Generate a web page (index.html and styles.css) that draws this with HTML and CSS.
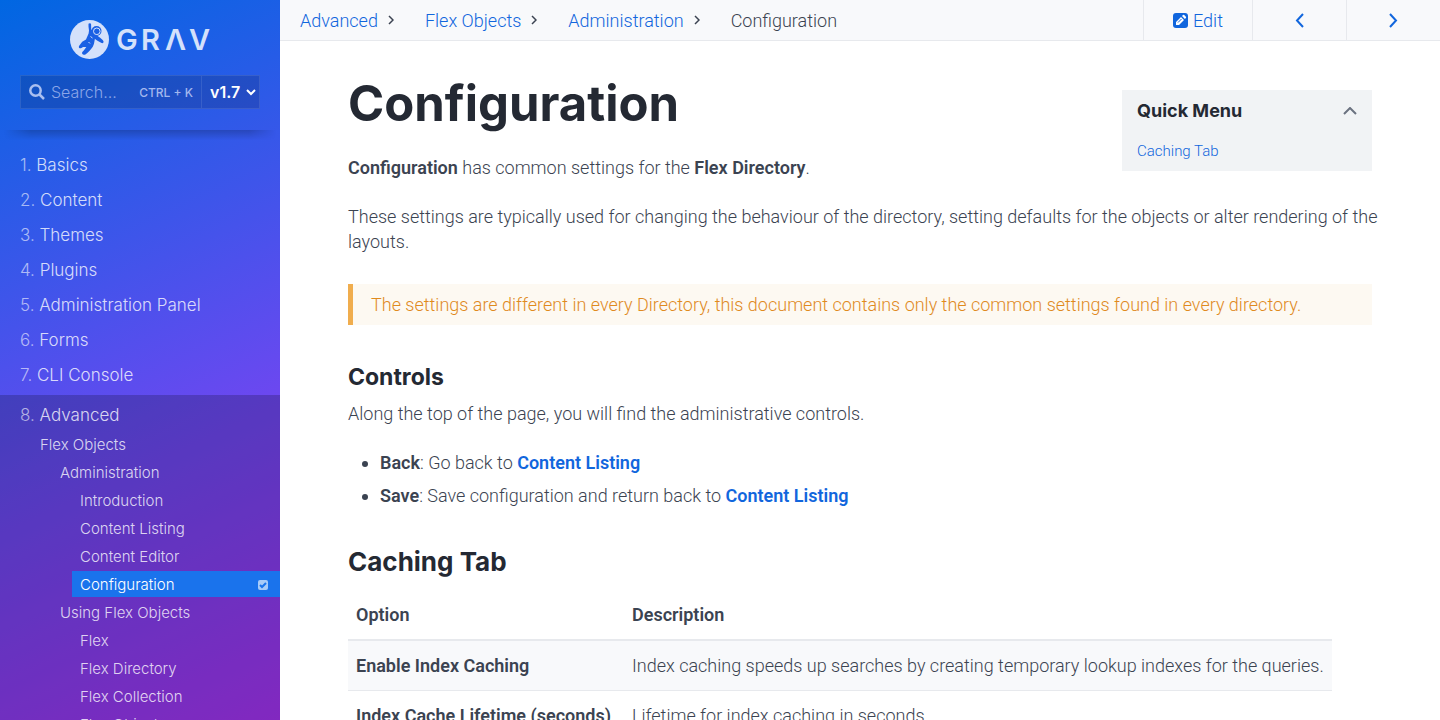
FILE: index.html
```html
<!DOCTYPE html>
<html lang="en">
<head>
    <meta charset="UTF-8">
    <meta name="viewport" content="width=device-width, initial-scale=1.0">
    <title>Configuration | Grav Documentation</title>
    <link rel="stylesheet" href="styles.css">
</head>
<body>
<aside class="sidebar">
    <header class="sidebar-header">
        <a class="logo" href="#" aria-label="Grav">
            <svg width="140" height="40" viewBox="0 0 140 40">
                <circle class="logo-disc" cx="19.500" cy="19.500" r="19.500"/>
                <g class="astronaut">
                    <path d="M18.500 3.800c1-.9 2.400-.6 2.600.8l.1 4.600 1.200 1.600 6.300 6c2 1.500 4 2.800 4.800 4.500.2 1.600-.7 2.300-1.900 1.800-2.500-1.200-5-2.600-6.700-4.300l-.9 5-1.200 3c-2.300 3-4.500 5.600-7 7.400-1.500.9-3 .7-3.600-.4-.6-1.200.6-2.200 1.600-3.200l2.500-3.500-3.200-.2c-1.400.8-2.200 1.500-3.200 1.400-1.200-.3-1.300-1.600-.7-2.600l3-3.900 3.800-2.300 2.600-5.900.4-3.200-.5-3.900z"/>
                    <circle cx="26.500" cy="11" r="5"/>
                </g>
                <circle class="visor" cx="26.800" cy="11.300" r="3.300"/>
                <path class="visor" d="M20.500 16.500l2 1.500M18.500 22l1.500 1.500"/>
                <text class="wordmark" x="46 71 95 119" y="30">GRΛV</text>
            </svg>
        </a>
        <form class="search-bar">
            <label class="search-field">
                <svg width="16" height="16" viewBox="0 0 16 16"><circle cx="6.500" cy="6.500" r="5.200"/><path d="M10.500 10.500l4.500 4.500"/></svg>
                <input class="search-input" type="search" placeholder="Search..." aria-label="Search">
                <span class="shortcut">CTRL + K</span>
            </label>
            <select class="version" aria-label="Version">
                <option>v1.7</option>
                <option>v1.6</option>
            </select>
        </form>
    </header>
    <nav class="menu">
        <ul class="topics">
            <li><a href="#"><b>1.</b> Basics</a></li>
            <li><a href="#"><b>2.</b> Content</a></li>
            <li><a href="#"><b>3.</b> Themes</a></li>
            <li><a href="#"><b>4.</b> Plugins</a></li>
            <li><a href="#"><b>5.</b> Administration Panel</a></li>
            <li><a href="#"><b>6.</b> Forms</a></li>
            <li><a href="#"><b>7.</b> CLI Console</a></li>
            <li class="parent"><a href="#"><b>8.</b> Advanced</a>
                <ul class="subtopics">
                    <li><a href="#">Flex Objects</a>
                        <ul>
                            <li><a href="#">Administration</a>
                                <ul>
                                    <li><a href="#">Introduction</a></li>
                                    <li><a href="#">Content Listing</a></li>
                                    <li><a href="#">Content Editor</a></li>
                                    <li><a class="active" href="#">Configuration
                                        <svg width="10" height="10" viewBox="0 0 10 10"><rect width="10" height="10" rx="2"/><path d="M2 5l2 2 4-4"/></svg>
                                    </a></li>
                                </ul>
                            </li>
                            <li><a href="#">Using Flex Objects</a>
                                <ul>
                                    <li><a href="#">Flex</a></li>
                                    <li><a href="#">Flex Directory</a></li>
                                    <li><a href="#">Flex Collection</a></li>
                                    <li><a href="#">Flex Object</a></li>
                                </ul>
                            </li>
                        </ul>
                    </li>
                </ul>
            </li>
        </ul>
    </nav>
</aside>

<div class="page">
    <header class="topbar">
        <nav class="breadcrumbs">
            <a href="#">Advanced</a>
            <svg width="6" height="10" viewBox="0 0 6 10"><path d="M1 1l4 4-4 4"/></svg>
            <a href="#">Flex Objects</a>
            <svg width="6" height="10" viewBox="0 0 6 10"><path d="M1 1l4 4-4 4"/></svg>
            <a href="#">Administration</a>
            <svg width="6" height="10" viewBox="0 0 6 10"><path d="M1 1l4 4-4 4"/></svg>
            <span>Configuration</span>
        </nav>
        <div class="page-links">
            <a class="edit-link" href="#">
                <svg width="15" height="15" viewBox="0 0 15 15"><rect class="edit-box" width="15" height="15" rx="3"/><path class="edit-pen" d="M3 12v-3l5-5 3 3-5 5zM9 3l1-1q.6-.4 1.200 0l1.700 1.700q.5.700 0 1.300l-1 1z"/><path class="edit-line" d="M5 9.500l3.500-3.500"/></svg>
                Edit
            </a>
            <a class="step-link" href="#" aria-label="Previous page"><svg width="9" height="15" viewBox="0 0 9 15"><path d="M8 1L2 7.500 8 14"/></svg></a>
            <a class="step-link" href="#" aria-label="Next page"><svg width="9" height="15" viewBox="0 0 9 15"><path d="M1 1l6 6.500L1 14"/></svg></a>
        </div>
    </header>

    <main class="content">
        <section class="quick-menu">
            <button class="quick-toggle">Quick Menu
                <svg width="14" height="8" viewBox="0 0 14 8"><path d="M1 7l6-6 6 6"/></svg>
            </button>
            <a href="#caching-tab">Caching Tab</a>
        </section>

        <h1>Configuration</h1>
        <p><strong>Configuration</strong> has common settings for the <strong>Flex Directory</strong>.</p>
        <p>These settings are typically used for changing the behaviour of the directory, setting defaults for the objects or alter rendering of the layouts.</p>
        <div class="notice">The settings are different in every Directory, this document contains only the common settings found in every directory.</div>

        <h3>Controls</h3>
        <p>Along the top of the page, you will find the administrative controls.</p>
        <ul class="controls">
            <li><strong>Back</strong>: Go back to <a href="#">Content Listing</a></li>
            <li><strong>Save</strong>: Save configuration and return back to <a href="#">Content Listing</a></li>
        </ul>

        <h2 id="caching-tab">Caching Tab</h2>
        <table class="options">
            <thead>
                <tr><th class="option-name">Option</th><th>Description</th></tr>
            </thead>
            <tbody>
                <tr><td><strong>Enable Index Caching</strong></td><td>Index caching speeds up searches by creating temporary lookup indexes for the queries.</td></tr>
                <tr><td><strong>Index Cache Lifetime (seconds)</strong></td><td>Lifetime for index caching in seconds.</td></tr>
            </tbody>
        </table>
    </main>
</div>
</body>
</html>
```
FILE: styles.css
```css
*{
    box-sizing:border-box;
}
body
{
    display:flex;
    height:100vh;
    margin:0;
    overflow:hidden;
    color:#3b4351;
    font-family:Inter, "Liberation Sans", sans-serif;
    font-size:17px;
    font-weight:300;
    line-height:25px;
}
a
{
    color:#1166dd;
    text-decoration:none;
}
strong
{
    font-weight:600;
}
svg
{
    fill:none;
    flex:none;
}

/* sidebar */
.sidebar
{
    width:280px;
    flex:none;
    overflow:hidden;
    background:linear-gradient(155deg, #0067e2 0%, #6b48f0 61%, #a333f0 100%);
}
.sidebar-header
{
    position:relative;
    height:130px;
    padding:20px 20px 0;
}
.sidebar-header::after
{
    content:"";
    position:absolute;
    left:4px;
    right:4px;
    top:130px;
    height:10px;
    background:linear-gradient(rgba(0,0,0,.2), transparent);
    mask-image:linear-gradient(to right, transparent, black 10%, black 90%, transparent);
}
.logo
{
    display:flex;
    justify-content:center;
    height:55px;
}
.logo-disc
{
    fill:#d4e1fb;
}
.astronaut
{
    fill:#1a60e4;
}
.visor
{
    stroke:#d4e1fb;
}
.wordmark
{
    fill:#d4e1fb;
    font-size:29px;
    font-weight:600;
}
.search-bar
{
    display:flex;
    height:34px;
    border:1px solid rgba(255,255,255,.1);
    background:rgba(0,0,0,.15);
}
.search-field
{
    display:flex;
    flex:1;
    align-items:center;
    gap:6px;
    padding:0 8px;
    min-width:0;
}
.search-field svg
{
    stroke:#a9bff0;
    stroke-width:2.5;
}
.search-input
{
    flex:1;
    min-width:0;
    padding:0;
    border:0;
    background:none;
    color:white;
    font:inherit;
    font-size:16px;
}
.search-input::placeholder
{
    color:#8aa6e8;
}
.shortcut
{
    color:#a3b8ee;
    font-size:12px;
    font-weight:500;
    white-space:nowrap;
}
.version
{
    width:58px;
    padding:0 0 0 4px;
    border:0;
    border-left:1px solid rgba(255,255,255,.1);
    background:none;
    color:white;
    font:inherit;
    font-weight:600;
    font-size:16px;
}
.menu ul
{
    list-style:none;
    margin:0;
    padding:0;
}
.menu .topics
{
    padding-top:18px;
}
.menu a
{
    display:block;
    color:rgba(255,255,255,.8);
}
.topics > li > a
{
    padding:5px 20px;
}
.menu b
{
    color:rgba(255,255,255,.6);
    font-weight:300;
}
.menu .parent
{
    margin-top:2px;
    padding-top:3px;
    background:rgba(0,0,0,.2);
}
.parent > a
{
    margin-bottom:-2px;
}
.menu .subtopics
{
    padding-left:32px;
    font-size:15px;
}
.menu .subtopics ul
{
    padding-left:20px;
}
.subtopics a
{
    margin-bottom:2px;
    padding:1px 8px 0;
}
.menu .active
{
    display:flex;
    align-items:center;
    justify-content:space-between;
    padding-right:12px;
    background:#1a73ec;
    color:white;
}
.active rect
{
    fill:#a8cbf8;
}
.active path
{
    stroke:#1a73ec;
    stroke-width:2;
}

/* page */
.page
{
    flex:1;
    min-width:0;
    font-family:Roboto, "Liberation Sans", sans-serif;
    font-size:18px;
}
.topbar
{
    display:flex;
    justify-content:space-between;
    height:41px;
    border-bottom:1px solid #e7e9ed;
    background:#f8f9fb;
}
.breadcrumbs
{
    display:flex;
    align-items:center;
    padding-left:20px;
}
.breadcrumbs svg
{
    margin:0 31px 0 10px;
    stroke:#3b4351;
    stroke-width:1.5;
}
.page-links
{
    display:flex;
}
.page-links a
{
    display:flex;
    align-items:center;
    justify-content:center;
    gap:5px;
    border-left:1px solid #e7e9ed;
}
.edit-link
{
    width:109px;
}
.step-link
{
    width:94px;
}
.step-link svg
{
    stroke:#1166dd;
    stroke-width:2;
}
.edit-box
{
    fill:#1166dd;
}
.edit-pen
{
    fill:white;
}
.edit-line
{
    stroke:#1166dd;
}
.content
{
    padding:35px 68px 0;
}
.quick-menu
{
    float:right;
    width:250px;
    height:81px;
    margin-top:14px;
    padding:8px 15px;
    background:#f1f3f5;
    font-size:15px;
}
.quick-toggle
{
    display:flex;
    align-items:center;
    justify-content:space-between;
    width:100%;
    margin-bottom:16px;
    padding:0;
    border:0;
    background:none;
    color:#242933;
    font:inherit;
    font-family:Inter, sans-serif;
    font-size:18px;
    font-weight:700;
}
.quick-toggle svg
{
    stroke:#6b7280;
    stroke-width:2;
}
h1, h2, h3
{
    margin:0;
    color:#242933;
    font-family:Inter, sans-serif;
    font-weight:700;
}
h1
{
    margin-bottom:23px;
    font-size:49px;
    line-height:56px;
}
h2
{
    font-size:26px;
    line-height:34px;
}
h3
{
    margin-bottom:10px;
    font-size:23px;
    line-height:28px;
}
p
{
    margin:0 -8px 24px 0;
}
.notice
{
    margin:30px 0 38px;
    padding:8px 18px;
    border-left:5px solid #f0ad4e;
    background:#fdf9f2;
    color:#e08a1e;
}
.controls
{
    margin:0 0 37px;
    padding-left:32px;
}
.controls li
{
    margin-bottom:8px;
}
.controls a
{
    font-weight:600;
}
.options
{
    margin-top:11px;
    border-collapse:collapse;
}
.options th, .options td
{
    padding:12px 8px;
    border-bottom:1px solid #e7e9ed;
    text-align:left;
    white-space:nowrap;
}
.options th
{
    border-bottom-width:2px;
    font-weight:600;
}
.options .option-name
{
    width:276px;
}
.options tbody tr:nth-child(odd)
{
    background:#f8f9fb;
}
```
